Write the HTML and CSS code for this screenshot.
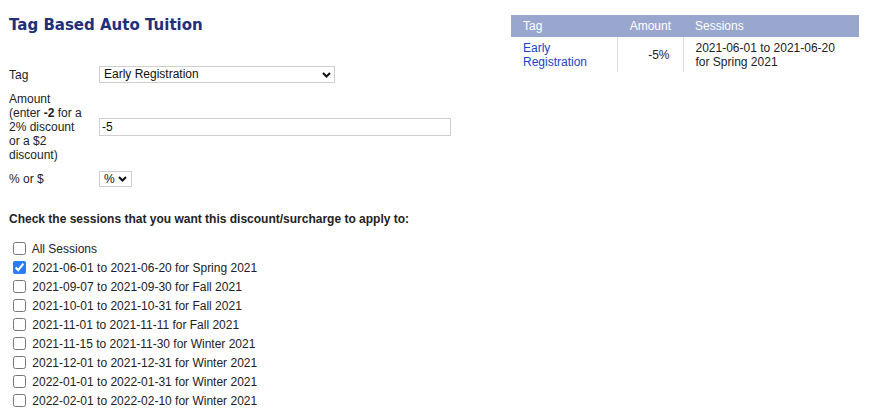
FILE: index.html
```html
<!DOCTYPE html>
<html>
<head>
<meta charset="utf-8">
<title>Tag Based Auto Tuition</title>
<link rel="stylesheet" href="styles.css">
</head>
<body>
<div class="page">
  <div class="left">
    <h1 class="title">Tag Based Auto Tuition</h1>
    <div class="form">
      <div class="label">Tag</div>
      <div class="field">
        <span class="select-wrap wide">
          <select class="select"><option>Early Registration</option></select>
          <svg class="chev" width="9" height="6" viewBox="0 0 9 6"><path d="M1 1 L4.5 4.5 L8 1" fill="none" stroke="#111" stroke-width="2"/></svg>
        </span>
      </div>
      <div class="label">Amount<br>(enter <b>-2</b> for a<br>2% discount<br>or a $2<br>discount)</div>
      <div class="field"><input class="text" type="text" value="-5"></div>
      <div class="label">% or $</div>
      <div class="field">
        <span class="select-wrap narrow">
          <select class="select"><option>%</option><option>$</option></select>
          <svg class="chev" width="9" height="6" viewBox="0 0 9 6"><path d="M1 1 L4.5 4.5 L8 1" fill="none" stroke="#111" stroke-width="2"/></svg>
        </span>
      </div>
    </div>
    <div class="heading">Check the sessions that you want this discount/surcharge to apply to:</div>
    <div class="sessions">
      <label class="row"><input type="checkbox" class="cb"> All Sessions</label>
      <label class="row"><input type="checkbox" class="cb" checked> 2021-06-01 to 2021-06-20 for Spring 2021</label>
      <label class="row"><input type="checkbox" class="cb"> 2021-09-07 to 2021-09-30 for Fall 2021</label>
      <label class="row"><input type="checkbox" class="cb"> 2021-10-01 to 2021-10-31 for Fall 2021</label>
      <label class="row"><input type="checkbox" class="cb"> 2021-11-01 to 2021-11-11 for Fall 2021</label>
      <label class="row"><input type="checkbox" class="cb"> 2021-11-15 to 2021-11-30 for Winter 2021</label>
      <label class="row"><input type="checkbox" class="cb"> 2021-12-01 to 2021-12-31 for Winter 2021</label>
      <label class="row"><input type="checkbox" class="cb"> 2022-01-01 to 2022-01-31 for Winter 2021</label>
      <label class="row"><input type="checkbox" class="cb"> 2022-02-01 to 2022-02-10 for Winter 2021</label>
    </div>
  </div>
  <div class="right">
    <table class="summary">
      <colgroup><col class="c-tag"><col class="c-amt"><col class="c-ses"></colgroup>
      <thead>
        <tr><th class="th-tag">Tag</th><th class="th-amt">Amount</th><th class="th-ses">Sessions</th></tr>
      </thead>
      <tbody>
        <tr>
          <td class="td-tag"><a href="#" class="link">Early Registration</a></td>
          <td class="td-amt">-5%</td>
          <td class="td-ses">2021-06-01 to 2021-06-20 for Spring 2021</td>
        </tr>
      </tbody>
    </table>
  </div>
</div>
</body>
</html>
```
FILE: styles.css
```css
html, body {
  margin: 0;
  padding: 0;
  background: #fff;
}
body {
  font-family: "Liberation Sans", Arial, sans-serif;
  font-size: 12px;
  color: #222;
}
.page {
  display: flex;
  padding: 15px 0 0 9px;
}
.left {
  width: 502px;
}
.title {
  margin: 0;
  font-family: "DejaVu Sans", Verdana, sans-serif;
  font-weight: bold;
  font-size: 15px;
  line-height: 20px;
  color: #21307a;
}
.form {
  display: grid;
  grid-template-columns: 90px auto;
  row-gap: 9px;
  align-items: center;
  margin-top: 31px;
}
.label {
  line-height: 14px;
}
.field {
  display: flex;
  align-items: center;
}
.select-wrap {
  position: relative;
  display: inline-block;
}
.select {
  appearance: none;
  -webkit-appearance: none;
  font-family: "Liberation Sans", Arial, sans-serif;
  font-size: 12px;
  color: #111;
  background: #fff;
  border: 1px solid #cfcfcf;
  border-radius: 0;
  margin: 0;
  padding: 0 16px 0 4px;
  height: 17px;
  line-height: 15px;
  display: block;
}
.wide .select {
  width: 236px;
}
.narrow .select {
  width: 33px;
  height: 16px;
}
.chev {
  position: absolute;
  right: 4px;
  top: 6px;
  pointer-events: none;
}
.narrow .chev {
  right: 5px;
  top: 5px;
}
.text {
  font-family: "Liberation Sans", Arial, sans-serif;
  font-size: 12px;
  color: #111;
  width: 352px;
  height: 18px;
  box-sizing: border-box;
  border: 1px solid #cfcfcf;
  padding: 0 2px;
  margin: 0;
  outline: none;
}
.heading {
  font-weight: bold;
  line-height: 14px;
  margin-top: 25px;
}
.sessions {
  margin-top: 13px;
  display: flex;
  flex-direction: column;
}
.row {
  display: flex;
  align-items: center;
  height: 19px;
  white-space: pre;
}
.cb {
  width: 13px;
  height: 13px;
  margin: 0 3px 0 4px;
  accent-color: #2b7cf6;
}
.right {
  padding-left: 0;
}
.summary {
  border-collapse: collapse;
  table-layout: fixed;
  width: 348px;
}
.c-tag { width: 106px; }
.c-amt { width: 66px; }
.c-ses { width: 176px; }
.summary th {
  background: #99a7cf;
  color: #fff;
  font-weight: normal;
  height: 22px;
  padding: 0 12px;
  text-align: left;
  line-height: 14px;
}
.summary th.th-amt {
  text-align: right;
}
.summary td {
  padding: 4px 12px 3px;
  line-height: 14px;
  vertical-align: middle;
  color: #222;
}
.summary td.td-amt {
  text-align: right;
  border-left: 1px solid #ddd;
  border-right: 1px solid #ddd;
  padding-right: 13px;
}
.link {
  color: #1a43c9;
  text-decoration: none;
}
```
